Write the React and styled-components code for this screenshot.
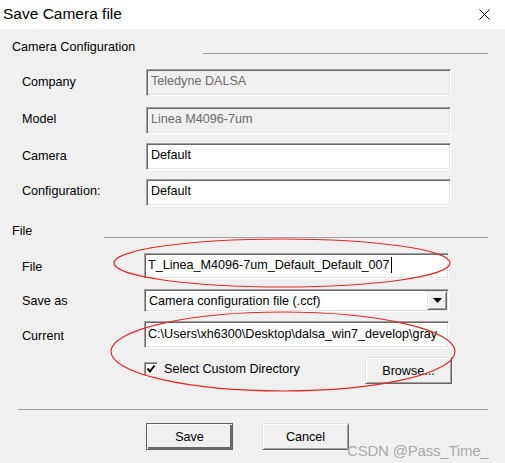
import React from "react";
import styled, { createGlobalStyle } from "styled-components";

const Global = createGlobalStyle`
  html, body { margin: 0; padding: 0; background: #f0f0f0; }
  body { font-family: "Liberation Sans", Arial, sans-serif; }
`;

const Window = styled.div`
  position: relative;
  width: 505px;
  height: 463px;
  background: #f0f0f0;
  display: flex;
  flex-direction: column;
  overflow: hidden;
  color: #000;
  font-size: 12.6px;
`;

const TitleBar = styled.div`
  height: 29px;
  background: #fff;
  display: flex;
  align-items: center;
  justify-content: space-between;
  padding: 0 15px 0 3px;
  box-sizing: border-box;
`;

const Title = styled.div`
  font-family: "Microsoft YaHei UI", "Liberation Sans", sans-serif;
  font-size: 15.5px;
  line-height: 20px;
  margin-top: -2px;
`;

const Body = styled.div`
  display: flex;
  flex-direction: column;
  padding: 0 17px 0 12px;
`;

const GroupHeader = styled.div`
  display: flex;
  height: 16px;
  margin-top: ${(p) => p.$mt}px;
  line-height: 16px;
`;

const GroupLine = styled.div`
  margin-left: auto;
  width: ${(p) => p.$w}px;
  height: 0;
  margin-top: 14px;
  border-top: 1px solid #a0a0a0;
`;

const Row = styled.div`
  display: grid;
  grid-template-columns: ${(p) => p.$lw}px 305px;
  align-items: center;
  padding-left: 10px;
  margin-top: ${(p) => p.$mt}px;
`;

const Label = styled.div`
  line-height: 16px;
  margin-top: ${(p) => p.$dy || 0}px;
`;

const Edit = styled.div`
  box-sizing: border-box;
  height: ${(p) => p.$h}px;
  border: 1px solid;
  border-color: #a0a0a0 #fff #fff #a0a0a0;
  box-shadow: inset 1px 1px 0 #696969, inset -1px -1px 0 #e3e3e3;
  background: ${(p) => (p.$disabled ? "#f0f0f0" : "#fff")};
  color: ${(p) => (p.$disabled ? "#6d6d6d" : "#000")};
  padding: ${(p) => (p.$pt ?? 3)}px 3px 0 ${(p) => p.$pl ?? 3}px;
  line-height: 16px;
  white-space: nowrap;
  overflow: hidden;
  display: flex;
  align-items: flex-start;
`;

const Caret = styled.span`
  display: inline-block;
  width: 1px;
  height: 16px;
  background: #000;
  margin-left: 1px;
`;

const Combo = styled(Edit)`
  align-items: center;
  justify-content: space-between;
  padding: 0 0 0 4px;
`;

const DropButton = styled.div`
  box-sizing: border-box;
  width: 20px;
  height: 19px;
  margin-right: 1px;
  border: 1px solid;
  border-color: #e3e3e3 #696969 #696969 #e3e3e3;
  box-shadow: inset 1px 1px 0 #fff, inset -1px -1px 0 #a0a0a0;
  display: flex;
  align-items: center;
  justify-content: center;
  background: #f0f0f0;
`;

const CheckRow = styled.div`
  display: flex;
  align-items: flex-start;
  justify-content: space-between;
`;

const CheckLabel = styled.label`
  display: flex;
  align-items: center;
  gap: 6px;
  margin-top: 4px;
  line-height: 16px;
`;

const CheckBox = styled.span`
  box-sizing: border-box;
  width: 14px;
  height: 14px;
  border: 1px solid;
  border-color: #a0a0a0 #fff #fff #a0a0a0;
  box-shadow: inset 1px 1px 0 #696969, inset -1px -1px 0 #e3e3e3;
  background: #fff;
  display: flex;
  align-items: center;
  justify-content: center;
`;

const Button = styled.div`
  box-sizing: border-box;
  width: ${(p) => p.$w}px;
  height: 27px;
  border: 1px solid;
  border-color: ${(p) =>
    p.$default ? "#646464" : "#e3e3e3 #696969 #696969 #e3e3e3"};
  box-shadow: ${(p) =>
    p.$default
      ? "inset 1px 1px 0 #fff, inset -2px -2px 0 #696969, inset -1px -1px 0 #a0a0a0"
      : "inset 1px 1px 0 #fff, inset -1px -1px 0 #a0a0a0"};
  background: #f0f0f0;
  display: flex;
  align-items: center;
  justify-content: center;
  line-height: 16px;
  margin-right: ${(p) => p.$mr || 0}px;
`;

const Separator = styled.div`
  margin: 25px 0 0 6px;
  border-top: 1px solid #a0a0a0;
`;

const ButtonRow = styled.div`
  display: flex;
  gap: 29px;
  padding-left: 134px;
  margin-top: 13px;
`;

const Watermark = styled.div`
  position: absolute;
  left: 347px;
  top: 442px;
  font-family: "Liberation Sans", Arial, sans-serif;
  font-size: 15px;
  line-height: 18px;
  color: #ababab;
  letter-spacing: -0.2px;
  pointer-events: none;
`;

const Marks = styled.svg`
  position: absolute;
  left: 0;
  top: 0;
  pointer-events: none;
`;

const CloseIcon = () => (
  <svg width="11" height="11" viewBox="0 0 11 11">
    <path d="M0.5 0.5 L10.5 10.5 M10.5 0.5 L0.5 10.5" stroke="#000" strokeWidth="1" fill="none" />
  </svg>
);

export default function App() {
  return (
    <>
      <Global />
      <Window>
        <TitleBar>
          <Title>Save Camera file</Title>
          <CloseIcon />
        </TitleBar>
        <Body>
          <GroupHeader $mt={10}>
            Camera Configuration
            <GroupLine $w={285} />
          </GroupHeader>
          <Row $lw={124} $mt={14}>
            <Label $dy={-2}>Company</Label>
            <Edit $h={27} $disabled $pt={3} $pl={4}>Teledyne DALSA</Edit>
          </Row>
          <Row $lw={124} $mt={11}>
            <Label $dy={-4}>Model</Label>
            <Edit $h={27} $disabled $pt={3} $pl={4}>Linea M4096-7um</Edit>
          </Row>
          <Row $lw={124} $mt={9}>
            <Label $dy={-2}>Camera</Label>
            <Edit $h={27} $pt={3} $pl={4}>Default</Edit>
          </Row>
          <Row $lw={124} $mt={9}>
            <Label $dy={-3}>Configuration:</Label>
            <Edit $h={27} $pt={3} $pl={4}>Default</Edit>
          </Row>
          <GroupHeader $mt={17}>
            File
            <GroupLine $w={384} />
          </GroupHeader>
          <Row $lw={122} $mt={14}>
            <Label $dy={1}>File</Label>
            <Edit $h={26} $pt={3}>
              T_Linea_M4096-7um_Default_Default_007
              <Caret />
            </Edit>
          </Row>
          <Row $lw={122} $mt={10}>
            <Label>Save as</Label>
            <Combo $h={23}>
              Camera configuration file (.ccf)
              <DropButton>
                <svg width="9" height="5" viewBox="0 0 9 5">
                  <polygon points="0,0 9,0 4.5,5" fill="#000" />
                </svg>
              </DropButton>
            </Combo>
          </Row>
          <Row $lw={122} $mt={9}>
            <Label $dy={2}>Current</Label>
            <Edit $h={27} $pt={4}>C:\Users\xh6300\Desktop\dalsa_win7_develop\gray</Edit>
          </Row>
          <Row $lw={122} $mt={9}>
            <span />
            <CheckRow>
              <CheckLabel>
                <CheckBox>
                  <svg width="10" height="10" viewBox="0 0 10 10">
                    <path d="M1.5 4.5 L4 7.5 L8.5 1.5" stroke="#000" strokeWidth="2" fill="none" />
                  </svg>
                </CheckBox>
                Select Custom Directory
              </CheckLabel>
              <Button $w={87} $mr={-3}>Browse...</Button>
            </CheckRow>
          </Row>
          <Separator />
          <ButtonRow>
            <Button $w={87} $default>Save</Button>
            <Button $w={87}>Cancel</Button>
          </ButtonRow>
        </Body>
        <Marks width="505" height="463" viewBox="0 0 505 463">
          <ellipse cx="282" cy="263" rx="168" ry="24" fill="none" stroke="#e8262a" strokeWidth="1.2" />
          <ellipse cx="283" cy="351.5" rx="172" ry="39.5" fill="none" stroke="#e8262a" strokeWidth="1.2" />
        </Marks>
        <Watermark>CSDN @Pass_Time_</Watermark>
      </Window>
    </>
  );
}
